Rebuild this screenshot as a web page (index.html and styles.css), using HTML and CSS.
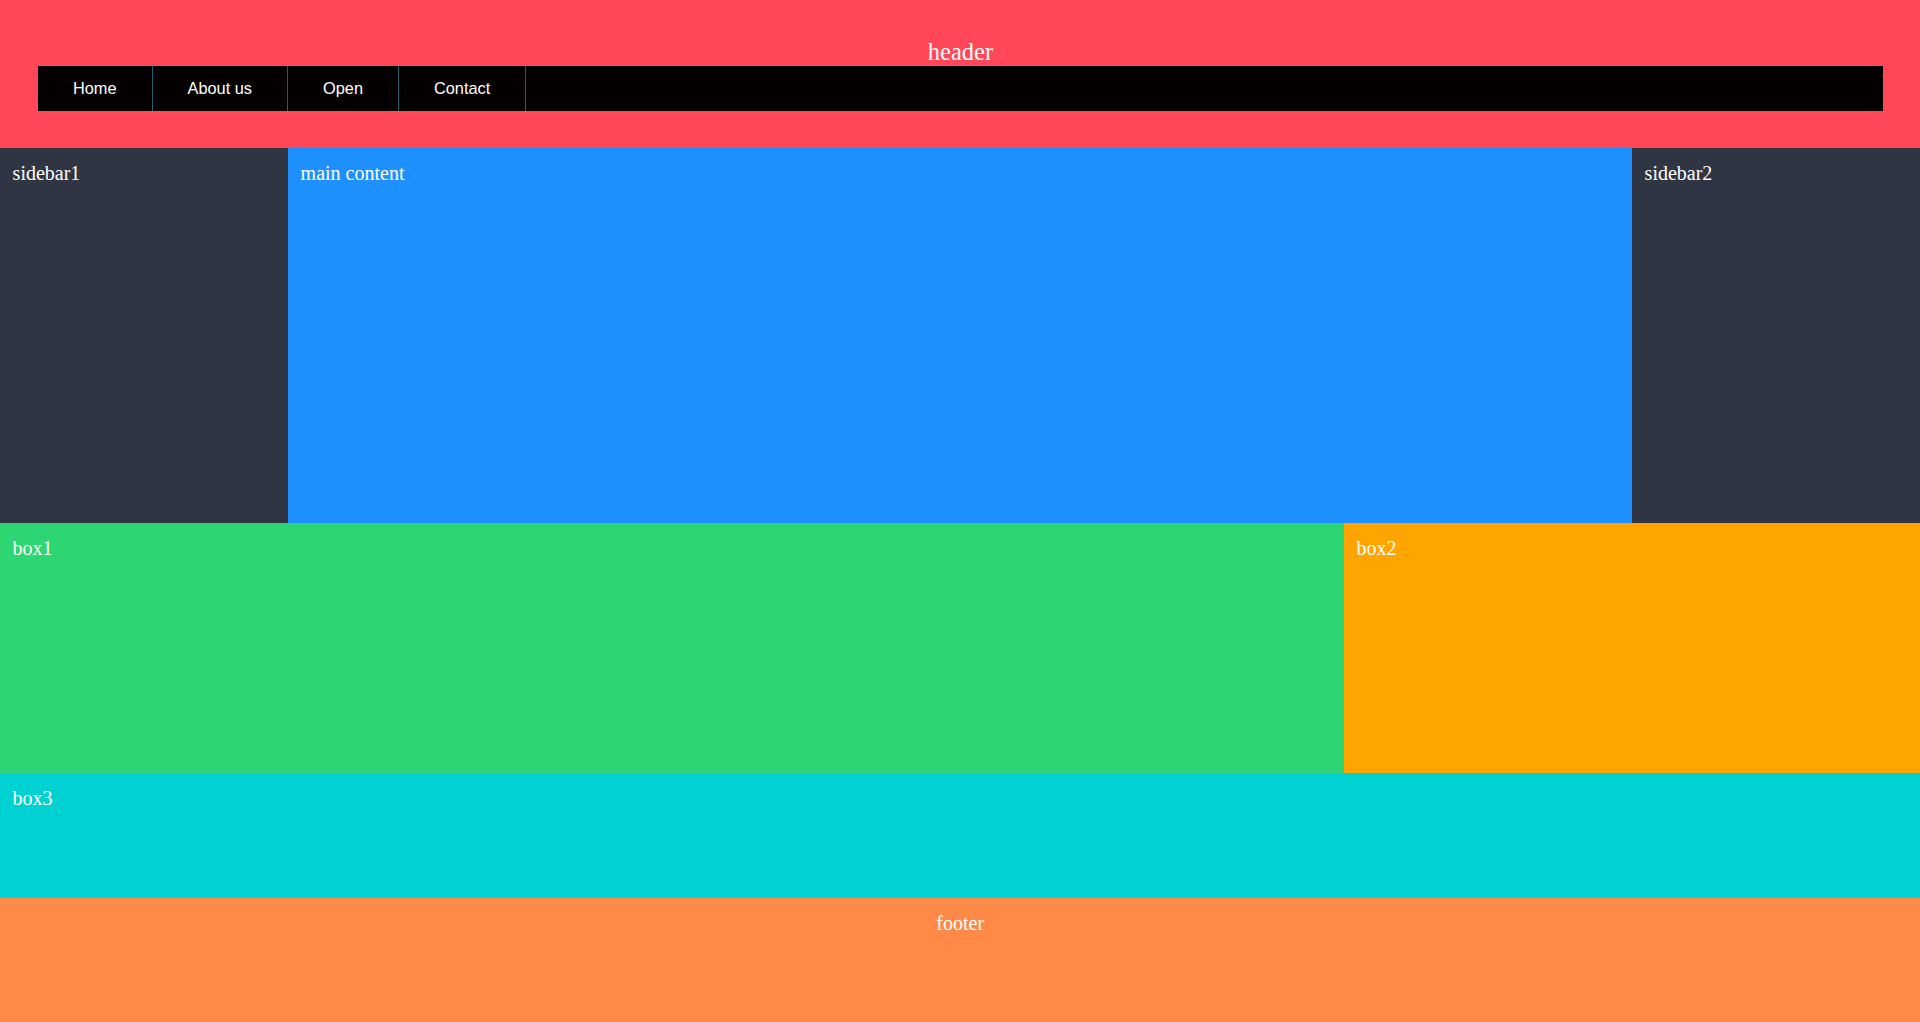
FILE: index.html
```html
<!DOCTYPE html>
<html lang="en">
<head>
<meta charset="utf-8">
<title>Layout</title>
<link rel="stylesheet" href="styles.css">
</head>
<body>
<div class="page">
  <header class="header">
    <div class="header-title">header</div>
    <nav class="nav">
      <a class="nav-item" href="#">Home</a>
      <a class="nav-item" href="#">About us</a>
      <a class="nav-item" href="#">Open</a>
      <a class="nav-item" href="#">Contact</a>
    </nav>
  </header>
  <div class="row-main">
    <aside class="panel sidebar">sidebar1</aside>
    <main class="panel main">main content</main>
    <aside class="panel sidebar">sidebar2</aside>
  </div>
  <div class="row-boxes">
    <section class="panel box1">box1</section>
    <section class="panel box2">box2</section>
  </div>
  <section class="panel box3">box3</section>
  <footer class="panel footer">footer</footer>
</div>
</body>
</html>
```
FILE: styles.css
```css
html, body {
  margin: 0;
  padding: 0;
}
body {
  font-family: "Liberation Serif", "Times New Roman", serif;
  font-size: 20px;
  color: #ffffff;
}
.page {
  display: grid;
  grid-template-rows: 148px 375px 250px 125px 124px;
  width: 1920px;
  height: 1022px;
}
.header {
  background: #ff4757;
  padding: 38px 37px 37px 38px;
  box-sizing: border-box;
  display: flex;
  flex-direction: column;
}
.header-title {
  font-size: 24.5px;
  line-height: 28px;
  height: 28px;
  text-align: center;
}
.nav {
  display: flex;
  height: 45px;
  background: #050000;
}
.nav-item {
  font-family: "Liberation Sans", Arial, sans-serif;
  font-size: 16.33px;
  line-height: 45px;
  color: #ffffff;
  text-decoration: none;
  padding: 0 35px;
  border-right: 1px solid #1f5f70;
}
.panel {
  padding: 13.6px 12.2px 12.2px 12.6px;
  line-height: 23px;
  box-sizing: border-box;
}
.row-main {
  display: flex;
}
.sidebar {
  flex: 0 0 288px;
  background: #2f3542;
}
.main {
  flex: 1 1 auto;
  background: #1e90ff;
}
.row-boxes {
  display: flex;
}
.box1 {
  flex: 0 0 1344px;
  background: #2ed573;
}
.box2 {
  flex: 1 1 auto;
  background: #ffa502;
}
.box3 {
  background: #00d2d3;
}
.footer {
  background: #ff8947;
  text-align: center;
}
```
